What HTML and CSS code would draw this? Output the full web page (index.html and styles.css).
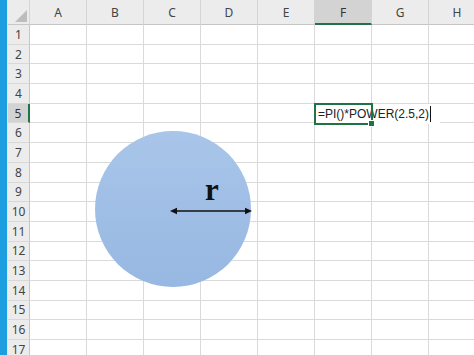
FILE: index.html
```html
<!DOCTYPE html>
<html>
<head>
<meta charset="utf-8">
<link rel="stylesheet" href="styles.css">
</head>
<body>
<div class="app">
  <div class="strip"></div>
  <div class="gap"></div>
  <div class="sheet">
    <div class="grid" id="grid">
      <div class="corner"><span class="tri"></span></div>
      <div class="ch">A</div><div class="ch">B</div><div class="ch">C</div><div class="ch">D</div><div class="ch">E</div><div class="ch sel">F</div><div class="ch">G</div><div class="ch">H</div>
    </div>
    <div class="shape">
      <div class="circle"></div>
      <span class="rlabel">r</span>
      <svg class="arrow" width="82" height="10" viewBox="0 0 82 10">
        <line x1="4" y1="5" x2="78" y2="5" stroke="#111" stroke-width="1.3"/>
        <polygon points="0,5 7,1.8 7,8.2" fill="#111"/>
        <polygon points="82,5 75,1.8 75,8.2" fill="#111"/>
      </svg>
    </div>
    <div class="edit">
      <span class="etext">=PI()*POWER(2.5,2)</span><span class="caret"></span>
    </div>
    <div class="editbox"><span class="handle"></span></div>
  </div>
</div>
<script>
(function(){
  var g=document.getElementById('grid');
  var html='';
  for(var r=1;r<=17;r++){
    html+='<div class="rh'+(r===5?' sel':'')+'">'+r+'</div>';
    for(var c=0;c<8;c++){html+='<div class="cell"></div>';}
  }
  g.insertAdjacentHTML('beforeend',html);
})();
</script>
</body>
</html>
```
FILE: styles.css
```css
html,body{margin:0;padding:0;background:#fff;overflow:hidden;}
body{width:474px;height:355px;font-family:"Liberation Sans",Arial,sans-serif;}
.app{display:flex;height:355px;}
.strip{width:7px;flex:none;background:#1c9ee0;}
.gap{width:1px;flex:none;background:#e4e4e4;}
.sheet{position:relative;flex:1;overflow:hidden;}
.grid{display:grid;grid-template-columns:22px repeat(8,57px);grid-template-rows:25px repeat(17,19.7px);}
.corner{background:#ececec;border-right:1px solid #d6d6d6;border-bottom:1px solid #c6c6c6;box-sizing:border-box;position:relative;}
.tri{position:absolute;left:7px;top:10px;width:0;height:0;border-style:solid;border-width:0 0 12px 12px;border-color:transparent transparent #bdbdbd transparent;}
.ch{background:#ececec;color:#444;font-family:"Noto Sans",sans-serif;font-size:12px;display:flex;align-items:center;justify-content:center;border-right:1px solid #d4d4d4;border-bottom:1px solid #c6c6c6;box-sizing:border-box;padding-top:1px;}
.ch.sel{background:#d3d3d3;border-bottom:2px solid #217346;color:#333;}
.rh{background:#ececec;color:#444;font-family:"Noto Sans",sans-serif;font-size:12px;display:flex;align-items:center;justify-content:center;border-right:1px solid #c6c6c6;border-bottom:1px solid #d8d8d8;box-sizing:border-box;}
.rh.sel{background:#d3d3d3;border-right:2px solid #217346;color:#333;}
.cell{border-right:1px solid #dadada;border-bottom:1px solid #dadada;box-sizing:border-box;}
.shape{position:absolute;left:87px;top:131px;width:160px;height:160px;}
.circle{position:absolute;left:0;top:0;width:156px;height:156px;border-radius:50%;background:linear-gradient(#a9c5e9,#97b8e2);}
.rlabel{position:absolute;left:110px;top:43px;font-family:"Liberation Serif","Times New Roman",serif;font-size:31px;font-weight:bold;line-height:31px;color:#111;}
.arrow{position:absolute;left:75px;top:75px;}
.edit{position:absolute;left:306px;top:104px;height:20px;width:126px;background:#fff;display:flex;align-items:center;padding-left:4px;box-sizing:border-box;}
.etext{font-size:12px;color:#222;}
.caret{display:inline-block;width:1px;height:16px;background:#111;margin-left:1px;}
.editbox{position:absolute;left:306px;top:103px;width:59px;height:22px;border:2px solid #217346;box-sizing:border-box;}
.handle{position:absolute;right:-4px;bottom:-4px;width:5px;height:5px;background:#217346;border:1px solid #fff;}
```
